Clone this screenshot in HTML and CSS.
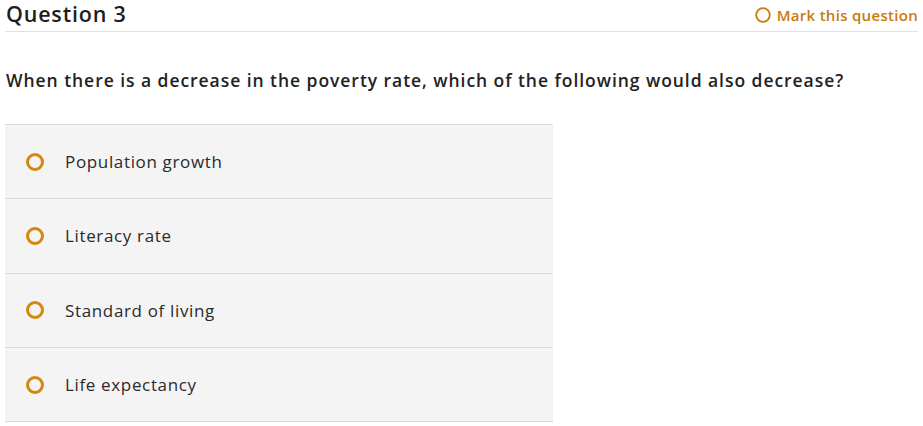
FILE: index.html
```html
<!DOCTYPE html>
<html>
<head>
<meta charset="utf-8">
<link rel="stylesheet" href="styles.css">
</head>
<body>
<div class="page">
  <div class="header">
    <h1 class="title">Question 3</h1>
    <div class="mark">
      <svg class="mark-icon" width="16" height="16" viewBox="0 0 16 16"><circle cx="8" cy="8" r="6.8" fill="none" stroke="#c97a0a" stroke-width="1.8"/></svg>
      <span>Mark this question</span>
    </div>
  </div>
  <p class="prompt">When there is a decrease in the poverty rate, which of the following would also decrease?</p>
  <div class="options">
    <div class="option"><span class="radio"></span><span class="label">Population growth</span></div>
    <div class="option"><span class="radio"></span><span class="label">Literacy rate</span></div>
    <div class="option"><span class="radio"></span><span class="label">Standard of living</span></div>
    <div class="option"><span class="radio"></span><span class="label">Life expectancy</span></div>
  </div>
</div>
</body>
</html>
```
FILE: styles.css
```css
html, body {
  margin: 0;
  padding: 0;
  background: #fff;
}
body {
  font-family: "Open Sans", Lato, "Liberation Sans", sans-serif;
  color: #222;
}
.page {
  padding: 0 5px;
}
.header {
  display: flex;
  justify-content: space-between;
  align-items: flex-end;
  height: 32px;
  border-bottom: 1.5px solid #e2e2e2;
  box-sizing: border-box;
}
.title {
  margin: 0 0 4px 1px;
  font-size: 21.5px;
  font-weight: 600;
  letter-spacing: 0.8px;
  color: #1e1e1e;
  line-height: 26px;
}
.mark {
  display: flex;
  align-items: center;
  gap: 6px;
  color: #c97a0a;
  font-size: 15px;
  font-weight: 600;
  letter-spacing: 0.3px;
  margin-bottom: 6px;
}
.mark-icon {
  display: block;
}
.prompt {
  margin: 37px 0 0 1px;
  font-size: 17.5px;
  font-weight: 600;
  letter-spacing: 0.95px;
  color: #222;
  line-height: 22px;
}
.options {
  margin-top: 33px;
  width: 548px;
  border-top: 1.5px solid #dcdcdc;
}
.option {
  display: flex;
  align-items: center;
  height: 73.3px;
  background: #f4f4f4;
  border-bottom: 1.5px solid #dcdcdc;
  padding-left: 21px;
}
.radio {
  width: 18px;
  height: 18px;
  box-sizing: border-box;
  border: 3px solid #d4870e;
  border-radius: 50%;
  flex: none;
}
.label {
  margin-left: 21px;
  font-size: 17px;
  letter-spacing: 0.65px;
  color: #2a2a2a;
}
```
